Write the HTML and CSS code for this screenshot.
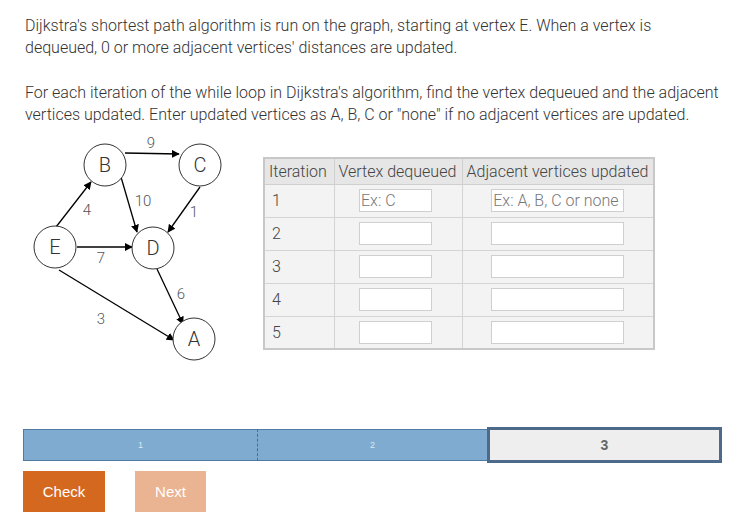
FILE: index.html
```html
<!DOCTYPE html>
<html>
<head>
<meta charset="utf-8">
<link rel="stylesheet" href="styles.css">
</head>
<body>
<div class="page">
  <p class="prompt">Dijkstra's shortest path algorithm is run on the graph, starting at vertex E. When a vertex is dequeued, 0 or more adjacent vertices' distances are updated.</p>
  <p class="prompt second">For each iteration of the while loop in Dijkstra's algorithm, find the vertex dequeued and the adjacent vertices updated. Enter updated vertices as A, B, C or "none" if no adjacent vertices are updated.</p>

  <div class="work">
    <svg class="graph" width="220" height="235" viewBox="23 130 220 235" xmlns="http://www.w3.org/2000/svg">
      <defs>
        <marker id="arr" viewBox="0 0 10 10" refX="9" refY="5" markerWidth="8" markerHeight="8" orient="auto" markerUnits="userSpaceOnUse">
          <path d="M0,0 L10,5 L0,10 z" fill="#000"/>
        </marker>
      </defs>
      <g stroke="#000" stroke-width="1.3" fill="none" marker-end="url(#arr)">
        <line x1="125" y1="153" x2="179" y2="154"/>
        <line x1="56" y1="227" x2="91" y2="182"/>
        <line x1="121" y1="177" x2="137" y2="232"/>
        <line x1="200" y1="187" x2="168" y2="232"/>
        <line x1="77" y1="247" x2="132" y2="247"/>
        <line x1="157" y1="269" x2="183" y2="324"/>
        <line x1="59" y1="270" x2="174" y2="340"/>
      </g>
      <g fill="#fff" stroke="#333" stroke-width="1">
        <circle cx="105" cy="165" r="21"/>
        <circle cx="200" cy="165" r="21"/>
        <circle cx="55" cy="247" r="21"/>
        <circle cx="153" cy="248" r="21"/>
        <circle cx="194" cy="339" r="21"/>
      </g>
      <g class="node-label" text-anchor="middle">
        <text x="105" y="172">B</text>
        <text x="200" y="172">C</text>
        <text x="55" y="254">E</text>
        <text x="153" y="255">D</text>
        <text x="194" y="346">A</text>
      </g>
      <g class="edge-label" text-anchor="middle">
        <text x="151" y="148">9</text>
        <text x="143" y="206">10</text>
        <text x="194" y="217">1</text>
        <text x="87" y="215">4</text>
        <text x="101" y="263">7</text>
        <text x="181" y="299">6</text>
        <text x="101" y="324">3</text>
      </g>
    </svg>

    <table class="answers">
      <thead>
        <tr><th class="c-iter">Iteration</th><th class="c-vert">Vertex dequeued</th><th class="c-adj">Adjacent vertices updated</th></tr>
      </thead>
      <tbody>
        <tr><td>1</td><td class="in"><input class="box small" placeholder="Ex: C"></td><td class="in"><input class="box wide" placeholder="Ex: A, B, C or none"></td></tr>
        <tr><td>2</td><td class="in"><input class="box small"></td><td class="in"><input class="box wide"></td></tr>
        <tr><td>3</td><td class="in"><input class="box small"></td><td class="in"><input class="box wide"></td></tr>
        <tr><td>4</td><td class="in"><input class="box small"></td><td class="in"><input class="box wide"></td></tr>
        <tr><td>5</td><td class="in"><input class="box small"></td><td class="in"><input class="box wide"></td></tr>
      </tbody>
    </table>
  </div>

  <div class="progress">
    <div class="seg done">1</div>
    <div class="seg done dashed">2</div>
    <div class="seg current">3</div>
  </div>

  <div class="buttons">
    <button class="btn check">Check</button>
    <button class="btn next">Next</button>
  </div>
</div>
</body>
</html>
```

FILE: styles.css
```css
* { box-sizing: border-box; }
html, body { margin: 0; padding: 0; background: #fff; }
.page {
  width: 753px;
  padding: 15px 31px 0 23px;
  font-family: Roboto, "Liberation Sans", sans-serif;
  font-weight: 300;
  color: #333;
}
.prompt {
  margin: 0 0 0 2px;
  font-size: 16px;
  line-height: 22px;
}
.prompt.second { margin-top: 23px; }

.work {
  display: flex;
  align-items: flex-start;
  margin-top: 4px;
}
.graph { display: block; flex: none; }
.node-label text {
  font-family: Roboto, sans-serif;
  font-weight: 300;
  font-size: 20px;
  fill: #333;
}
.edge-label text {
  font-family: Roboto, sans-serif;
  font-weight: 300;
  font-size: 15px;
  fill: #555;
}

.answers {
  margin: 27px 0 0 20px;
  border-collapse: collapse;
  border: 2px solid #c8c8c8;
  font-size: 16px;
  color: #444;
}
.answers th {
  font-weight: 300;
  background: #e6e6e6;
  height: 26px;
  padding: 0 4px;
  text-align: left;
  border: 1px solid #cfcfcf;
  white-space: nowrap;
}
.answers td {
  background: #f3f3f3;
  height: 33px;
  padding: 0 7px;
  border: 1px solid #d4d4d4;
}
.c-iter { width: 70px; }
.c-vert { width: 128px; }
.c-adj { width: 192px; }
.answers td.in { text-align: center; padding: 0; }
.box {
  display: inline-block;
  vertical-align: middle;
  height: 23px;
  border: 1px solid #cfcfcf;
  background: #fff;
  font-family: Roboto, sans-serif;
  font-weight: 300;
  font-size: 16px;
  padding: 0 1px;
  color: #333;
}
.box::placeholder { color: #777; }
.box.small { width: 73px; margin-right: 5px; }
.box.wide { width: 133px; }

.progress {
  display: flex;
  align-items: center;
  margin-top: 62px;
  height: 36px;
  width: 699px;
}
.seg {
  height: 32px;
  display: flex;
  align-items: center;
  justify-content: center;
  font-family: "Liberation Sans", Arial, sans-serif;
}
.seg.done {
  width: 233px;
  background: #7eabcf;
  border: 1px solid #4f7aa1;
  color: #dbe8f2;
  font-size: 9px;
}
.seg.done:first-child { width: 234px; border-right: none; }
.seg.dashed { border-left: 1px dashed #466c92; width: 230px; border-right: none; }
.seg.current {
  flex: 1;
  height: 36px;
  background: #eeeeee;
  border: 3px solid #4d6a8a;
  color: #666;
  font-weight: bold;
  font-size: 14px;
}

.buttons {
  display: flex;
  gap: 30px;
  margin-top: 8px;
}
.btn {
  height: 41px;
  border: none;
  color: #fff;
  font-family: "Liberation Sans", Arial, sans-serif;
  font-size: 15px;
  padding: 0;
}
.btn.check { width: 82px; background: #d5681f; }
.btn.next { width: 71px; background: #eab391; }
```
